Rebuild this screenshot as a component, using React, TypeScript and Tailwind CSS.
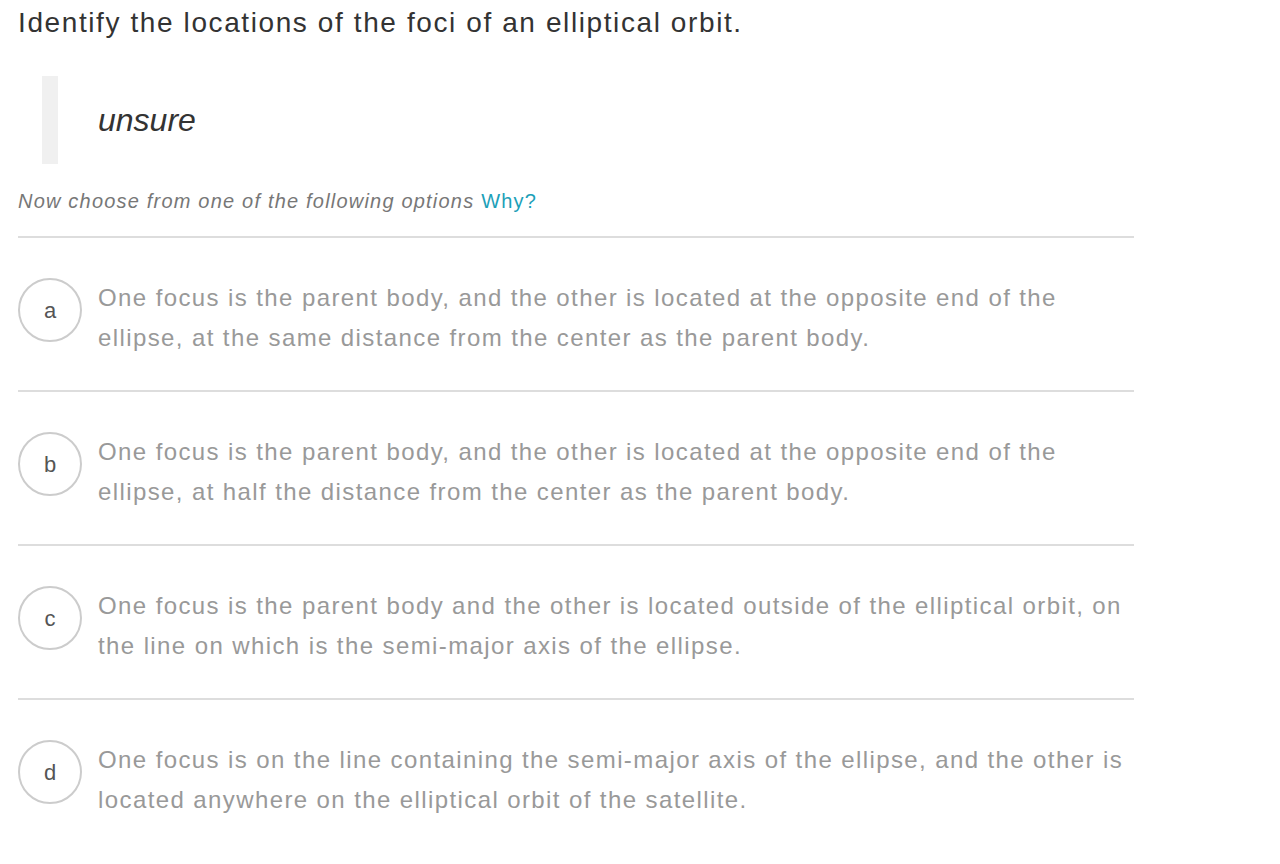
import React from "react";

const options = [
  {
    key: "a",
    text: "One focus is the parent body, and the other is located at the opposite end of the ellipse, at the same distance from the center as the parent body.",
  },
  {
    key: "b",
    text: "One focus is the parent body, and the other is located at the opposite end of the ellipse, at half the distance from the center as the parent body.",
  },
  {
    key: "c",
    text: "One focus is the parent body and the other is located outside of the elliptical orbit, on the line on which is the semi-major axis of the ellipse.",
  },
  {
    key: "d",
    text: "One focus is on the line containing the semi-major axis of the ellipse, and the other is located anywhere on the elliptical orbit of the satellite.",
  },
];

function OptionRow({ letter, text }: { letter: string; text: string }) {
  return (
    <li className="flex items-start gap-4 border-t-2 border-[#dddddd] pt-10 pb-8">
      <span className="flex h-16 w-16 shrink-0 items-center justify-center rounded-full border-2 border-[#cccccc] text-[22px] text-[#555555]">
        {letter}
      </span>
      <p className="text-[24px] leading-[40px] tracking-[1.4px] text-[#999999]">{text}</p>
    </li>
  );
}

export default function App() {
  return (
    <div className="min-h-[864px] bg-white font-['Liberation_Sans',Arial,sans-serif]">
      <div className="w-[1134px] pl-[18px]">
        <h1 className="pt-[3px] text-[28px] leading-[40px] tracking-[1.6px] text-[#333333]">
          Identify the locations of the foci of an elliptical orbit.
        </h1>
        <blockquote className="mt-[33px] ml-6 flex h-[88px] items-center border-l-16 border-[#f0f0f0] pl-[40px]">
          <span className="text-[32px] italic text-[#333333]">unsure</span>
        </blockquote>
        <p className="mt-[22px] text-[20px] leading-[30px] italic tracking-[1.2px] text-[#777777]">
          Now choose from one of the following options{" "}
          <a href="#" className="not-italic text-[#1ca0b8]">
            Why?
          </a>
        </p>
        <ul className="mt-[20px]">
          {options.map((o) => (
            <OptionRow key={o.key} letter={o.key} text={o.text} />
          ))}
        </ul>
      </div>
    </div>
  );
}
